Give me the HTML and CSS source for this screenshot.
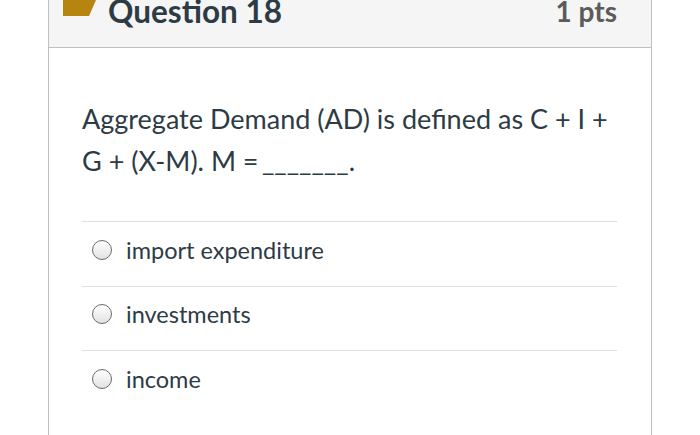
FILE: index.html
```html
<!DOCTYPE html>
<html>
<head>
<meta charset="utf-8">
<link rel="stylesheet" href="styles.css">
</head>
<body>
<div class="card">
  <div class="header">
    <div class="title-wrap">
      <svg class="flag" width="33" height="16" viewBox="0 0 33 16"><polygon points="0,0 33,0 26,16 0,16" fill="#b5850f"/></svg>
      <h2 class="title">Question 18</h2>
    </div>
    <div class="pts">1 pts</div>
  </div>
  <div class="body">
    <p class="question">Aggregate Demand (AD) is defined as C + I + G + (X-M). M =&#8201;_______.</p>
    <div class="answers">
      <label class="answer"><span class="radio"></span><span class="label">import expenditure</span></label>
      <label class="answer"><span class="radio"></span><span class="label">investments</span></label>
      <label class="answer"><span class="radio"></span><span class="label">income</span></label>
    </div>
  </div>
</div>
</body>
</html>
```
FILE: styles.css
```css
html, body {
  margin: 0;
  padding: 0;
  background: #ffffff;
  font-family: Lato, "Liberation Sans", sans-serif;
  color: #2d3b45;
}
.card {
  margin-left: 48px;
  width: 602px;
  height: 435px;
  border-left: 1px solid #bfbfbf;
  border-right: 1px solid #bfbfbf;
}
.header {
  height: 47px;
  background: #f5f5f5;
  border-bottom: 1px solid #bfbfbf;
  display: flex;
  justify-content: space-between;
  align-items: flex-start;
  padding: 0 34px 0 14px;
}
.title-wrap {
  display: flex;
  align-items: flex-start;
  gap: 12px;
}
.flag {
  display: block;
  flex: none;
}
.title {
  margin: -4px 0 0 0;
  font-size: 31.5px;
  line-height: 31px;
  font-weight: 700;
  color: #2d3b45;
}
.pts {
  margin-top: -3px;
  font-size: 28px;
  line-height: 28px;
  font-weight: 700;
  color: #5b5b5b;
}
.body {
  padding: 50px 34px 0 33px;
}
.question {
  margin: 0 0 39px 0;
  font-size: 27px;
  line-height: 42px;
}
.answer {
  box-sizing: border-box;
  display: flex;
  align-items: center;
  height: 64.5px;
  border-top: 1px solid #dedede;
  padding: 0 0 8px 10px;
  gap: 14px;
}
.radio {
  width: 18px;
  height: 18px;
  border-radius: 50%;
  border: 1px solid #6a6a6a;
  background: linear-gradient(#ffffff, #e2e2e2);
  flex: none;
}
.label {
  font-size: 23.5px;
  color: #2d3b45;
}
```
